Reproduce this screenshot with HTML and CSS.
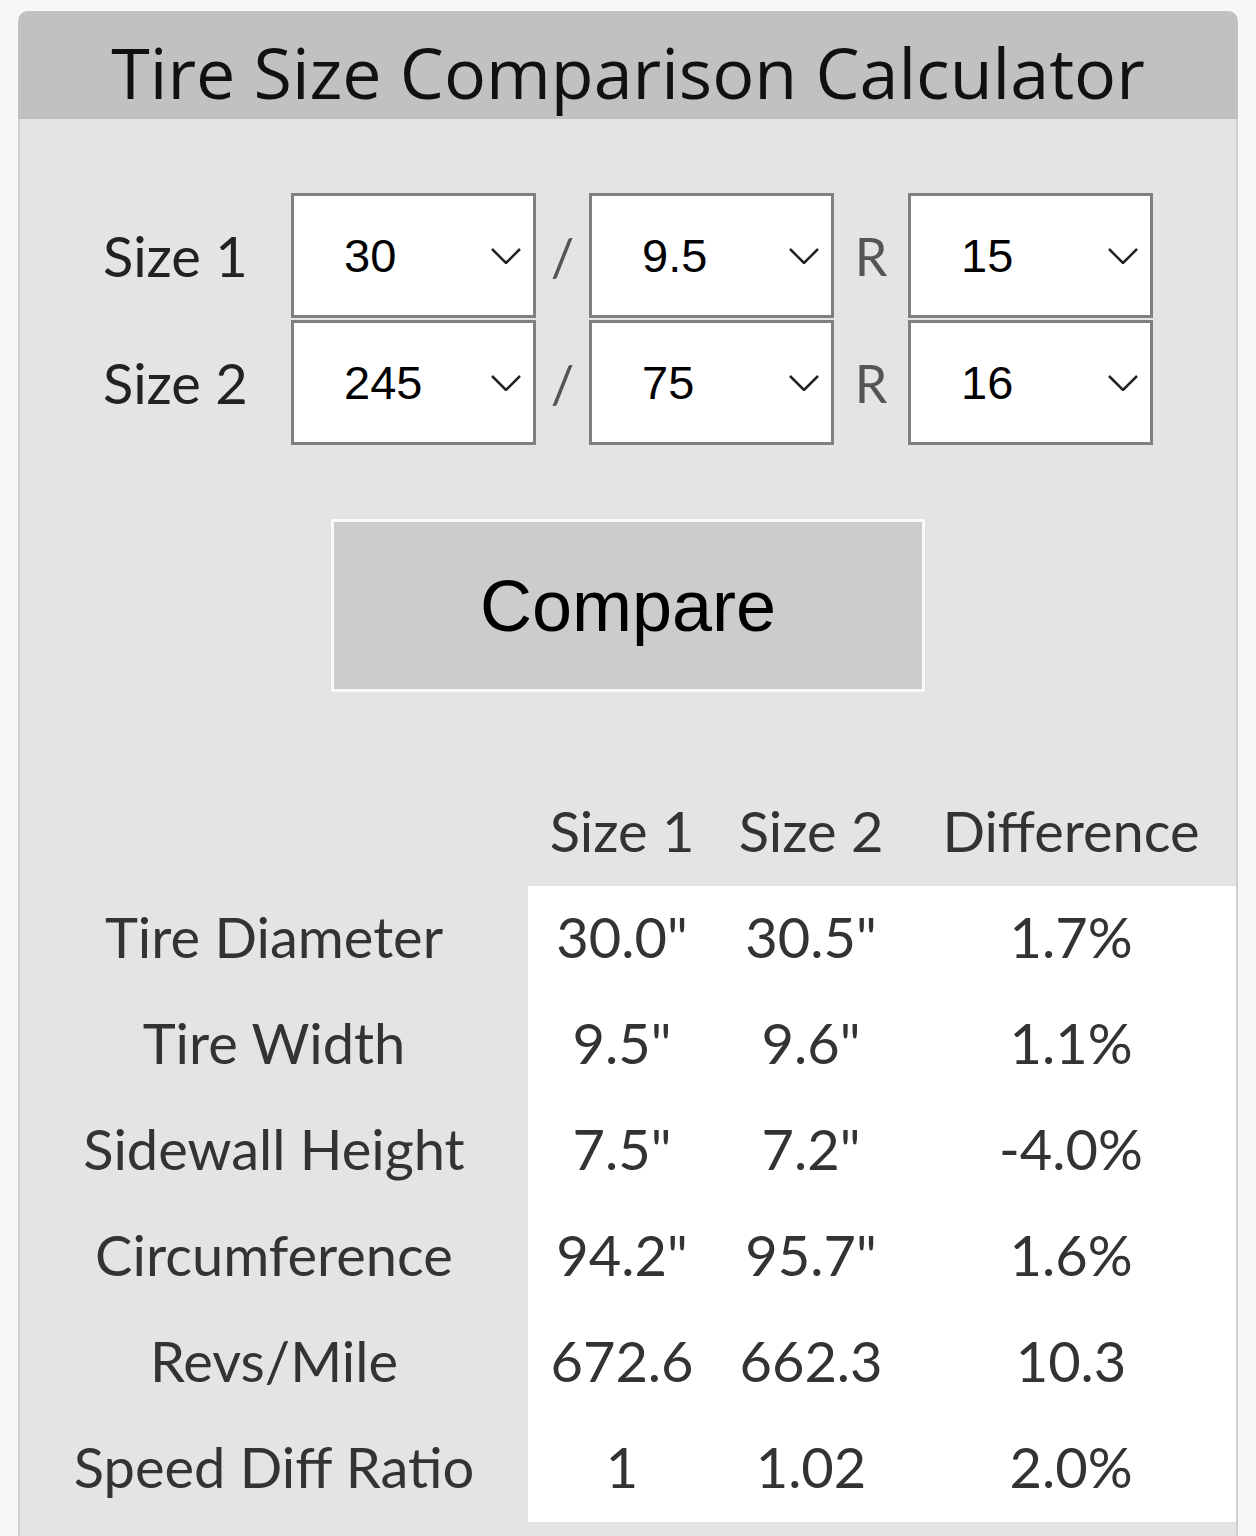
FILE: index.html
```html
<!DOCTYPE html>
<html lang="en">

<head>
    <meta charset="UTF-8">
    <meta name="viewport" content="width=device-width, initial-scale=1.0">
    <title>Tire Size Comparison Calculator</title>
    <link rel="stylesheet" href="styles.css">
</head>

<body>
    <div class="calculator">
        <h1 class="calc-title">Tire Size Comparison Calculator</h1>

        <div class="calc-body">
            <div class="size-grid">
                <label class="size-label" for="w1">Size 1</label>
                <div class="select-wrap">
                    <select id="w1"><option>30</option></select>
                    <svg class="chevron" viewBox="0 0 30 16"><path d="M1 1 L15 15 L29 1" /></svg>
                </div>
                <span class="sep">/</span>
                <div class="select-wrap">
                    <select id="a1"><option>9.5</option></select>
                    <svg class="chevron" viewBox="0 0 30 16"><path d="M1 1 L15 15 L29 1" /></svg>
                </div>
                <span class="sep">R</span>
                <div class="select-wrap">
                    <select id="r1"><option>15</option></select>
                    <svg class="chevron" viewBox="0 0 30 16"><path d="M1 1 L15 15 L29 1" /></svg>
                </div>

                <label class="size-label" for="w2">Size 2</label>
                <div class="select-wrap">
                    <select id="w2"><option>245</option></select>
                    <svg class="chevron" viewBox="0 0 30 16"><path d="M1 1 L15 15 L29 1" /></svg>
                </div>
                <span class="sep">/</span>
                <div class="select-wrap">
                    <select id="a2"><option>75</option></select>
                    <svg class="chevron" viewBox="0 0 30 16"><path d="M1 1 L15 15 L29 1" /></svg>
                </div>
                <span class="sep">R</span>
                <div class="select-wrap">
                    <select id="r2"><option>16</option></select>
                    <svg class="chevron" viewBox="0 0 30 16"><path d="M1 1 L15 15 L29 1" /></svg>
                </div>
            </div>

            <div class="btn-row">
                <button class="compare-btn">Compare</button>
            </div>

            <table class="results">
                <thead>
                    <tr>
                        <th></th>
                        <th>Size 1</th>
                        <th>Size 2</th>
                        <th>Difference</th>
                    </tr>
                </thead>
                <tbody>
                    <tr><th>Tire Diameter</th><td>30.0"</td><td>30.5"</td><td>1.7%</td></tr>
                    <tr><th>Tire Width</th><td>9.5"</td><td>9.6"</td><td>1.1%</td></tr>
                    <tr><th>Sidewall Height</th><td>7.5"</td><td>7.2"</td><td>-4.0%</td></tr>
                    <tr><th>Circumference</th><td>94.2"</td><td>95.7"</td><td>1.6%</td></tr>
                    <tr><th>Revs/Mile</th><td>672.6</td><td>662.3</td><td>10.3</td></tr>
                    <tr><th>Speed Diff Ratio</th><td>1</td><td>1.02</td><td>2.0%</td></tr>
                </tbody>
            </table>
        </div>
    </div>
</body>

</html>
```

FILE: styles.css
```css
body {
    margin: 0;
    padding: 0;
    background-color: #f7f7f7;
    font-family: "Liberation Sans", Arial, sans-serif;
}

.calculator {
    margin: 11px 18px 0 18px;
    width: 1220px;
}

.calc-title {
    margin: 0;
    height: 108px;
    box-sizing: border-box;
    padding-top: 18px;
    line-height: 1.25;
    text-align: center;
    font-family: "Open Sans", sans-serif;
    font-weight: 400;
    font-size: 70px;
    color: #111;
    background-color: #c1c1c1;
    border-radius: 10px 10px 0 0;
    white-space: nowrap;
}

.calc-body {
    background-color: #e4e4e4;
    border-left: 2px solid #cfcfcf;
    border-right: 2px solid #cfcfcf;
    padding: 74px 0 15px 0;
}

.size-grid {
    display: grid;
    grid-template-columns: 271px 245px 53px 245px 74px 245px;
    grid-auto-rows: 125px;
    row-gap: 2px;
    align-items: center;
}

.size-label {
    padding-left: 83px;
    font-family: Lato, "Open Sans", sans-serif;
    font-size: 56px;
    color: #222;
}

.sep {
    text-align: center;
    font-family: Lato, sans-serif;
    font-size: 52px;
    color: #555;
}

.select-wrap {
    position: relative;
    height: 125px;
}

.select-wrap select {
    appearance: none;
    -webkit-appearance: none;
    width: 100%;
    height: 100%;
    margin: 0;
    padding: 0 0 0 50px;
    box-sizing: border-box;
    border: 3px solid #808080;
    border-radius: 0;
    background-color: #ffffff;
    font-family: "Liberation Sans", Arial, sans-serif;
    font-size: 47px;
    color: #000;
}

.chevron {
    position: absolute;
    right: 15px;
    top: 55px;
    width: 30px;
    height: 16px;
    fill: none;
    stroke: #222;
    stroke-width: 2.5;
    pointer-events: none;
}

.btn-row {
    display: flex;
    justify-content: center;
    padding-top: 74px;
}

.compare-btn {
    width: 594px;
    height: 173px;
    border: 3px solid #fafafa;
    background-color: #cccccc;
    font-family: "Liberation Sans", Arial, sans-serif;
    font-size: 72px;
    color: #000;
    cursor: pointer;
}

.results {
    width: 100%;
    margin-top: 88px;
    border-collapse: collapse;
    font-family: Lato, "Open Sans", sans-serif;
    font-size: 56px;
    color: #333;
}

.results th,
.results td {
    padding: 0 0 6px 0;
    height: 106px;
    box-sizing: border-box;
    text-align: center;
    font-weight: 400;
}

.results th:nth-child(1) {
    width: 508px;
}

.results th:nth-child(2) {
    width: 188px;
}

.results th:nth-child(3) {
    width: 190px;
}

.results tbody td {
    background-color: #ffffff;
}
```
